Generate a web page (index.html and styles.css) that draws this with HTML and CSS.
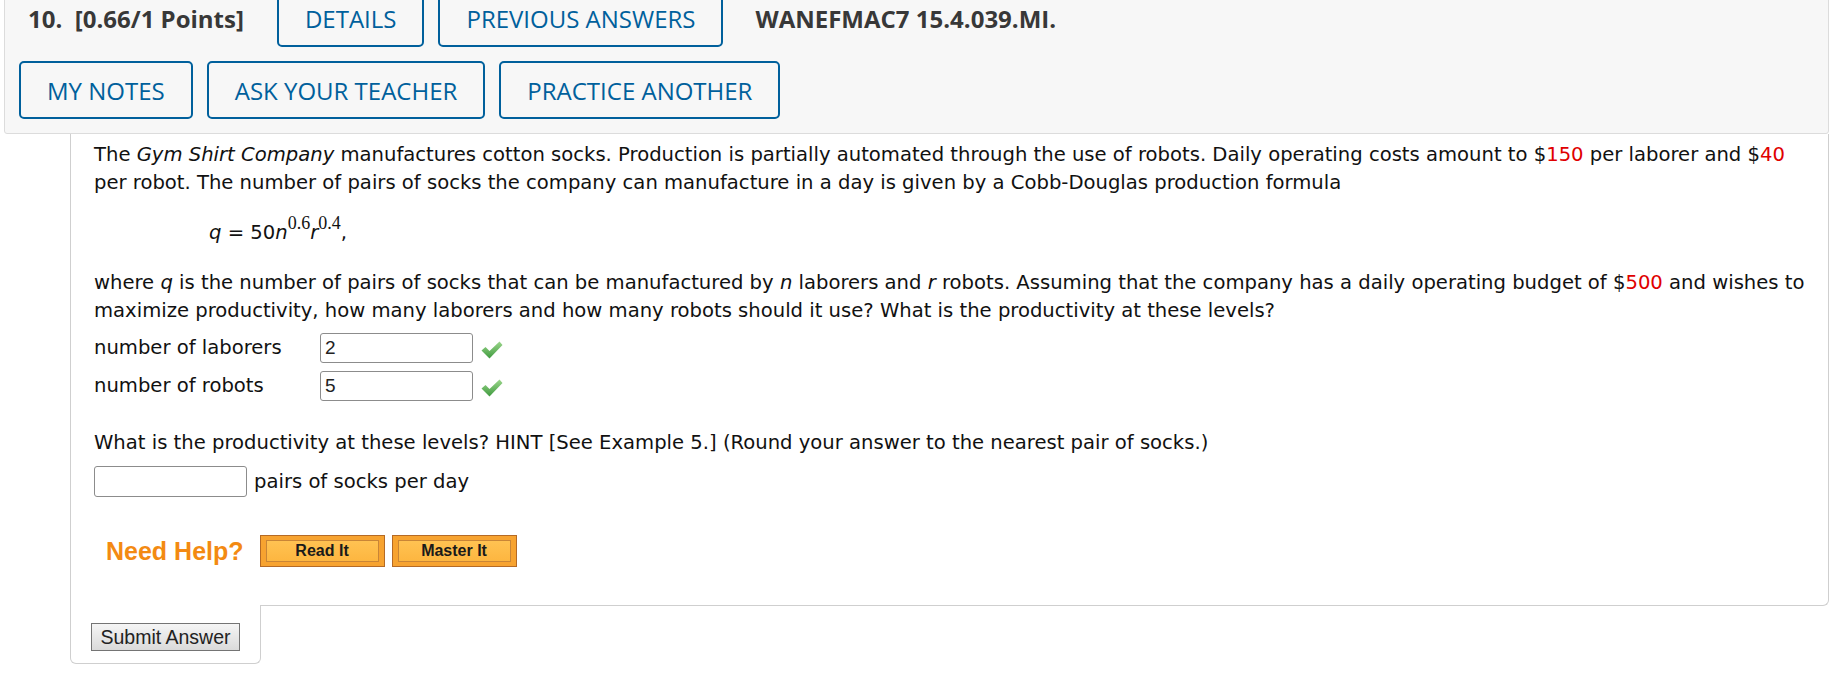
FILE: index.html
```html
<!DOCTYPE html>
<html>
<head>
<meta charset="utf-8">
<link rel="stylesheet" href="styles.css">
</head>
<body>
<div class="page">
  <div class="qhead">
    <div class="row">
      <span class="qnum">10.&nbsp; [0.66/1 Points]</span>
      <button class="btn">DETAILS</button>
      <button class="btn">PREVIOUS ANSWERS</button>
      <span class="qid">WANEFMAC7 15.4.039.MI.</span>
    </div>
    <div class="row">
      <button class="btn">MY NOTES</button>
      <button class="btn">ASK YOUR TEACHER</button>
      <button class="btn">PRACTICE ANOTHER</button>
    </div>
  </div>
  <div class="qbody">
    <p class="para">The <i>Gym Shirt Company</i> manufactures cotton socks. Production is partially automated through the use of robots. Daily operating costs amount to $<span class="red">150</span> per laborer and $<span class="red">40</span> per robot. The number of pairs of socks the company can manufacture in a day is given by a Cobb-Douglas production formula</p>
    <p class="formula"><i>q</i> = 50<i>n</i><sup>0.6</sup><i>r</i><sup>0.4</sup>,</p>
    <p class="para gap">where <i>q</i> is the number of pairs of socks that can be manufactured by <i>n</i> laborers and <i>r</i> robots. Assuming that the company has a daily operating budget of $<span class="red">500</span> and wishes to maximize productivity, how many laborers and how many robots should it use? What is the productivity at these levels?</p>
    <div class="ansrow">
      <span class="lbl">number of laborers</span>
      <span class="inp">2</span>
      <svg class="check" width="22" height="18" viewBox="0 0 22 18"><defs><linearGradient id="g1" x1="0" y1="0" x2="0" y2="1"><stop offset="0" stop-color="#9bd68b"/><stop offset="1" stop-color="#3f9a3f"/></linearGradient></defs><polygon points="0.5,9.5 4.5,6 8.5,10 18.5,0.5 21.5,4 8.5,17.5" fill="url(#g1)"/></svg>
    </div>
    <div class="ansrow">
      <span class="lbl">number of robots</span>
      <span class="inp">5</span>
      <svg class="check" width="22" height="18" viewBox="0 0 22 18"><defs><linearGradient id="g2" x1="0" y1="0" x2="0" y2="1"><stop offset="0" stop-color="#9bd68b"/><stop offset="1" stop-color="#3f9a3f"/></linearGradient></defs><polygon points="0.5,9.5 4.5,6 8.5,10 18.5,0.5 21.5,4 8.5,17.5" fill="url(#g2)"/></svg>
    </div>
    <p class="para hint">What is the productivity at these levels? HINT [See Example 5.] (Round your answer to the nearest pair of socks.)</p>
    <div class="prodrow">
      <span class="inp wide"></span>
      <span class="unit">pairs of socks per day</span>
    </div>
    <div class="help">
      <span class="needhelp">Need Help?</span>
      <span class="hbtn"><span class="hin">Read It</span></span>
      <span class="hbtn"><span class="hin">Master It</span></span>
    </div>
  </div>
  <div class="submitbox">
    <button class="submit">Submit Answer</button>
  </div>
</div>
</body>
</html>
```
FILE: styles.css
```css
body {
  margin: 0;
  background: #fff;
  font-family: "DejaVu Sans", Verdana, sans-serif;
  color: #111;
}
.page {
  width: 1825px;
  margin: -22px 0 0 4px;
}
.qhead {
  background: #f7f7f7;
  border: 1px solid #dcdcdc;
  border-radius: 0 0 3px 3px;
  padding: 10px 14px 14px;
  display: flex;
  flex-direction: column;
  gap: 14px;
}
.row {
  display: flex;
  align-items: center;
  gap: 14px;
}
.btn {
  box-sizing: border-box;
  height: 58px;
  padding: 0 26px;
  border: 2px solid #00609c;
  border-radius: 5px;
  background: transparent;
  color: #00609c;
  font-family: "Open Sans", sans-serif;
  font-size: 24px;
  font-weight: 500;
  display: flex;
  align-items: center;
  cursor: pointer;
}
.qnum {
  font-family: "Open Sans", sans-serif;
  font-weight: bold;
  font-size: 24px;
  color: #383838;
  margin: 0 19px 0 9px;
}
.qid {
  font-family: "Open Sans", sans-serif;
  font-weight: bold;
  font-size: 24px;
  color: #383838;
  margin-left: 18px;
}
.qbody {
  margin-left: 66px;
  width: 1759px;
  box-sizing: border-box;
  border: 1px solid #cfcfcf;
  border-top: 0;
  border-radius: 0 0 6px 0;
  padding: 7px 8px 38px 23px;
  font-size: 19.6px;
  line-height: 28px;
}
.para { margin: 0; }
.red { color: #e00000; }
.formula {
  margin: 22px 0 0;
  padding-left: 115px;
}
.formula sup {
  font-family: "Liberation Serif", serif;
  font-size: 18px;
  line-height: 0;
  vertical-align: 0.55em;
}
.gap { margin-top: 22px; }
.ansrow {
  display: flex;
  align-items: center;
  height: 30px;
  margin-top: 8px;
}
.lbl { width: 226px; }
.inp {
  box-sizing: border-box;
  width: 153px;
  height: 30px;
  border: 1px solid #8c8c8c;
  border-radius: 3px;
  padding: 0 4px;
  font-family: "Liberation Sans", Arial, sans-serif;
  font-size: 19px;
  line-height: 28px;
  color: #222;
  background: #fff;
}
.check { margin-left: 8px; margin-top: 3px; }
.hint { margin-top: 28px; }
.prodrow {
  display: flex;
  align-items: center;
  margin-top: 9px;
}
.inp.wide { height: 31px; }
.unit { margin-left: 7px; }
.help {
  display: flex;
  align-items: center;
  margin-top: 38px;
  padding-left: 12px;
}
.needhelp {
  font-family: "Liberation Sans", Arial, sans-serif;
  font-weight: bold;
  font-size: 25px;
  color: #f38a12;
  margin-right: 16px;
}
.hbtn {
  box-sizing: border-box;
  width: 125px;
  height: 32px;
  padding: 4px 5px;
  border: 1px solid #b56a25;
  background: #f7a330;
  margin-right: 7px;
  display: flex;
}
.hin {
  flex: 1;
  border: 1px solid #c98536;
  background: linear-gradient(#ffc252, #fdb640);
  font-family: "Liberation Sans", Arial, sans-serif;
  font-weight: bold;
  font-size: 16px;
  color: #1a1a1a;
  display: flex;
  align-items: center;
  justify-content: center;
}
.submitbox {
  position: relative;
  margin-top: -1px;
  margin-left: 66px;
  width: 191px;
  box-sizing: border-box;
  background: #fff;
  border: 1px solid #cfcfcf;
  border-top: 0;
  border-radius: 0 0 6px 6px;
  padding: 18px 0 12px 20px;
}
.submit {
  box-sizing: border-box;
  width: 149px;
  height: 28px;
  border: 1px solid #747474;
  background: linear-gradient(#f5f5f5, #dadada);
  font-family: "Liberation Sans", Arial, sans-serif;
  font-size: 19.5px;
  color: #222;
  padding: 0;
}
```
